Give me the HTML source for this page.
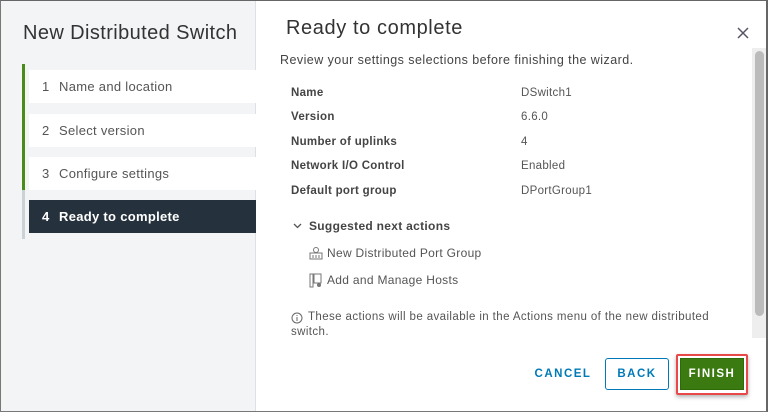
<!DOCTYPE html>
<html><head><meta charset="utf-8"><style>
*{margin:0;padding:0;box-sizing:border-box}
body{width:768px;height:412px;overflow:hidden;font-family:"Liberation Sans",sans-serif;background:#fff;position:relative;letter-spacing:0.3px}
.frame{position:absolute;left:0;top:0;width:768px;height:412px;border:1px solid #777;border-top-color:#666;border-right:2px solid #666}
.left{position:absolute;left:1px;top:1px;width:255px;height:410px;background:#f2f4f6;border-right:1px solid #dde1e5}
.ltitle{position:absolute;left:22px;top:21px;font-size:20px;color:#333;letter-spacing:0.4px}
.bar{position:absolute;left:22px;width:3px}
.step{position:absolute;left:29px;width:227px;height:33px;background:#fff;font-size:13px;color:#555;padding-left:13px;line-height:33px}
.step.act{background:#25323d;color:#fff;font-weight:bold}
.step span{display:inline-block;width:17px}
.rtitle{position:absolute;left:286px;top:17px;font-size:20px;color:#333;letter-spacing:0.6px}
.sub{position:absolute;left:280px;top:53px;font-size:12.5px;color:#444;letter-spacing:0.45px}
.k{position:absolute;left:291px;font-size:11.5px;font-weight:bold;color:#444}
.v{position:absolute;left:521px;font-size:11.5px;color:#555}
.t{position:absolute;font-size:12px;color:#555}
.btn{position:absolute;font-size:11.5px;letter-spacing:1.5px;font-weight:bold;text-align:center}
</style></head><body>
<div class="left">
<div class="ltitle">New Distributed Switch</div>
</div>
<div class="bar" style="top:64px;height:126px;background:#4a8b1a"></div>
<div class="bar" style="top:190px;height:49px;background:#ccd1d6"></div>
<div class="step" style="top:70px"><span>1</span>Name and location</div>
<div class="step" style="top:114px"><span>2</span>Select version</div>
<div class="step" style="top:157px"><span>3</span>Configure settings</div>
<div class="step act" style="top:200px"><span>4</span>Ready to complete</div>

<div class="rtitle">Ready to complete</div>
<svg style="position:absolute;left:737px;top:27px" width="12" height="12"><path d="M1 1L11 11M11 1L1 11" stroke="#556" stroke-width="1.5"/></svg>
<div class="sub">Review your settings selections before finishing the wizard.</div>
<div class="k" style="top:87px">Name</div><div class="v" style="top:87px">DSwitch1</div>
<div class="k" style="top:111px">Version</div><div class="v" style="top:111px">6.6.0</div>
<div class="k" style="top:136px">Number of uplinks</div><div class="v" style="top:136px">4</div>
<div class="k" style="top:160px">Network I/O Control</div><div class="v" style="top:160px">Enabled</div>
<div class="k" style="top:185px">Default port group</div><div class="v" style="top:185px">DPortGroup1</div>
<svg style="position:absolute;left:293px;top:223px" width="9" height="6"><path d="M1 1L4.5 4.5L8 1" stroke="#555" fill="none" stroke-width="1.3"/></svg>
<div class="k" style="left:309px;top:219px;font-size:12px">Suggested next actions</div>
<svg style="position:absolute;left:309px;top:246px" width="14" height="14"><rect x="1" y="7" width="12" height="6" fill="none" stroke="#777"/><circle cx="7" cy="4" r="2.5" fill="none" stroke="#777"/><path d="M4 9v3M7 9v3M10 9v3" stroke="#777"/></svg>
<div class="t" style="left:327px;top:246px">New Distributed Port Group</div>
<svg style="position:absolute;left:309px;top:273px" width="14" height="15"><rect x="1" y="1" width="3" height="13" fill="none" stroke="#777"/><rect x="5" y="1" width="7" height="9" fill="none" stroke="#777"/><circle cx="10" cy="12" r="2" fill="#777"/></svg>
<div class="t" style="left:327px;top:273px">Add and Manage Hosts</div>
<svg style="position:absolute;left:291px;top:312px" width="12" height="12"><circle cx="6" cy="6" r="5" fill="none" stroke="#666"/><path d="M6 5v4M6 3v1" stroke="#666"/></svg>
<div class="t" style="left:291px;top:310px;width:430px;line-height:15px;font-size:11.5px;text-indent:17px;letter-spacing:0.4px">These actions will be available in the Actions menu of the new distributed switch.</div>

<div style="position:absolute;left:752px;top:48px;width:14px;height:290px;background:#eee"></div>
<div style="position:absolute;left:755px;top:51px;width:9px;height:265px;background:#bbb;border-radius:5px"></div>

<div class="btn" style="left:532px;top:368px;width:62px;color:#0079b8">CANCEL</div>
<div class="btn" style="left:605px;top:358px;width:64px;height:32px;border:1px solid #0079b8;border-radius:3px;line-height:30px;color:#0079b8">BACK</div>
<div style="position:absolute;left:676px;top:354px;width:72px;height:41px;border:2px solid #e84848;border-radius:2px;box-shadow:0 2px 4px rgba(0,0,0,.3)"></div>
<div class="btn" style="left:680px;top:358px;width:64px;height:32px;background:#3b7a10;border:1px solid #2f6a0a;line-height:30px;color:#fff">FINISH</div>
<div class="frame"></div>
</body></html>
